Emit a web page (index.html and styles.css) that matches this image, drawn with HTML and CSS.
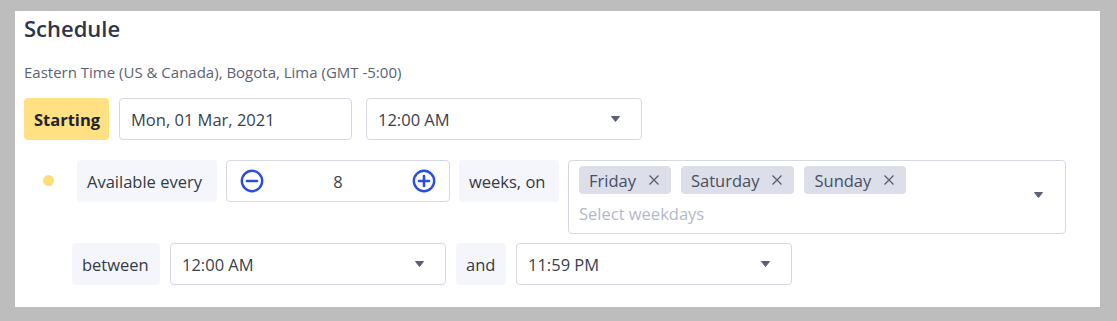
FILE: index.html
```html
<!DOCTYPE html>
<html lang="en">
<head>
  <meta charset="UTF-8">
  <meta name="viewport" content="width=device-width, initial-scale=1.0">
  <title>Schedule</title>
  <link rel="stylesheet" href="styles.css">
</head>
<body>
  <!-- Schedule card -->
  <section class="card">
    <h2>Schedule</h2>
    <p class="timezone">Eastern Time (US &amp; Canada), Bogota, Lima (GMT -5:00)</p>

    <!-- Start -->
    <div class="row">
      <span class="badge">Starting</span>
      <div class="field date">Mon, 01 Mar, 2021</div>
      <div class="field select time">
        <span>12:00 AM</span>
        <svg class="caret" width="9" height="6" viewBox="0 0 9 6"><path d="M0.5 0.5h8l-4 5z" fill="#5a6175" stroke="#5a6175" stroke-linejoin="round"/></svg>
      </div>
    </div>

    <!-- Repeat -->
    <div class="row repeat">
      <span class="dot"></span>
      <span class="label every">Available every</span>
      <div class="field stepper">
        <svg class="step-icon" width="24" height="24" viewBox="0 0 24 24"><circle cx="12" cy="12" r="10.2" fill="none" stroke="#2b4de2" stroke-width="2.4"/><path d="M7 12h10" stroke="#2b4de2" stroke-width="2.6" stroke-linecap="round"/></svg>
        <span class="value">8</span>
        <svg class="step-icon" width="24" height="24" viewBox="0 0 24 24"><circle cx="12" cy="12" r="10.2" fill="none" stroke="#2b4de2" stroke-width="2.4"/><path d="M7 12h10M12 7v10" stroke="#2b4de2" stroke-width="2.6" stroke-linecap="round"/></svg>
      </div>
      <span class="label weeks">weeks, on</span>
      <div class="field multiselect">
        <div class="choices">
          <div class="tags">
            <span class="tag">Friday <svg class="x" width="12" height="12" viewBox="0 0 12 12"><path d="M1.5 1.5l9 9M10.5 1.5l-9 9" stroke="#5a6175" stroke-width="1.4"/></svg></span>
            <span class="tag">Saturday <svg class="x" width="12" height="12" viewBox="0 0 12 12"><path d="M1.5 1.5l9 9M10.5 1.5l-9 9" stroke="#5a6175" stroke-width="1.4"/></svg></span>
            <span class="tag">Sunday <svg class="x" width="12" height="12" viewBox="0 0 12 12"><path d="M1.5 1.5l9 9M10.5 1.5l-9 9" stroke="#5a6175" stroke-width="1.4"/></svg></span>
          </div>
          <span class="placeholder">Select weekdays</span>
        </div>
        <svg class="caret" width="9" height="6" viewBox="0 0 9 6"><path d="M0.5 0.5h8l-4 5z" fill="#5a6175" stroke="#5a6175" stroke-linejoin="round"/></svg>
      </div>
    </div>

    <!-- Hours -->
    <div class="row hours">
      <span class="label between">between</span>
      <div class="field select time">
        <span>12:00 AM</span>
        <svg class="caret" width="9" height="6" viewBox="0 0 9 6"><path d="M0.5 0.5h8l-4 5z" fill="#5a6175" stroke="#5a6175" stroke-linejoin="round"/></svg>
      </div>
      <span class="label and">and</span>
      <div class="field select time">
        <span>11:59 PM</span>
        <svg class="caret" width="9" height="6" viewBox="0 0 9 6"><path d="M0.5 0.5h8l-4 5z" fill="#5a6175" stroke="#5a6175" stroke-linejoin="round"/></svg>
      </div>
    </div>
  </section>
</body>
</html>
```

FILE: styles.css
```css
body {
  font-family: "Open Sans", Lato, sans-serif;
  margin: 0;
  padding: 11px 17px 14px 15px;
  background-color: #bdbdbd;
  color: #343a48;
}
.card {
  background-color: #fff;
  padding: 4px 10px 22px 9px;
}
h2 {
  margin: 0;
  font-size: 22px;
  line-height: 26px;
  font-weight: 600;
  color: #30354a;
}
.timezone {
  margin: 21px 0 0;
  font-size: 15px;
  line-height: 20px;
  color: #5b6275;
}
.row {
  display: flex;
  align-items: flex-start;
  margin-top: 16px;
  font-size: 16.5px;
}
.row > * {
  flex-shrink: 0;
  white-space: nowrap;
}
.row.repeat {
  margin-top: 20px;
  padding-left: 19px;
}
.row.hours {
  margin-top: 9px;
  padding-left: 48px;
}
.badge,
.label {
  display: flex;
  align-items: center;
  height: 42px;
  padding: 0 10px;
  border-radius: 4px;
  box-sizing: border-box;
}
.badge {
  background-color: #ffe082;
  font-weight: 700;
  color: #1f2330;
  width: 85px;
  margin-right: 10px;
}
.label {
  background-color: #f5f6fb;
  color: #333a45;
}
.field {
  display: flex;
  align-items: center;
  height: 42px;
  padding: 0 11px;
  border: 1px solid #d6d9e4;
  border-radius: 4px;
  box-sizing: border-box;
  color: #3a3f4e;
}
.date {
  width: 233px;
  margin-right: 14px;
}
.select {
  justify-content: space-between;
  padding-right: 21px;
}
.time {
  width: 276px;
}
.hours .label,
.hours .field {
  margin-right: 10px;
}
.between {
  width: 88px;
}
.and {
  width: 50px;
}
.dot {
  width: 11px;
  height: 11px;
  border-radius: 50%;
  background-color: #ffde7a;
  margin: 15px 23px 0 0;
}
.repeat .label {
  margin-right: 9px;
}
.every {
  width: 140px;
}
.weeks {
  width: 100px;
}
.stepper {
  width: 224px;
  padding: 0 13px;
  justify-content: space-between;
  margin-right: 9px;
}
.step-icon {
  display: block;
}
.multiselect {
  width: 498px;
  height: 74px;
  padding: 5px 22px 9px 10px;
}
.choices {
  flex: 1;
  display: flex;
  flex-direction: column;
  align-self: stretch;
}
.tags {
  display: flex;
  gap: 10px;
}
.tag {
  display: flex;
  align-items: center;
  gap: 12px;
  height: 28px;
  padding: 0 11px 0 10px;
  border-radius: 4px;
  background-color: #dcdfea;
  color: #474e5f;
}
.x {
  display: block;
}
.placeholder {
  margin-top: 10px;
  line-height: 20px;
  color: #b3b9cd;
}
.caret {
  display: block;
  flex-shrink: 0;
}
```
